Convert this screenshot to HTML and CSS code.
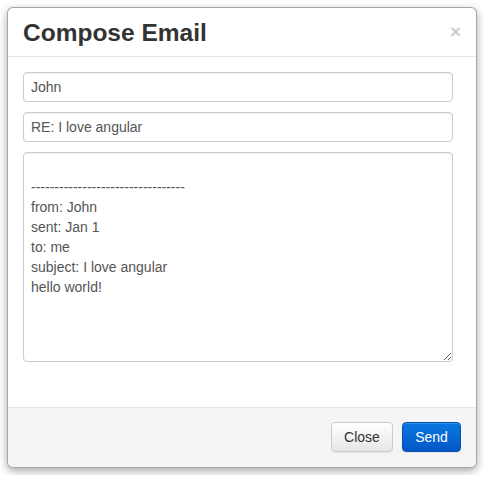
FILE: index.html
```html
<!DOCTYPE html>
<html>
<head>
<meta charset="utf-8">
<link rel="stylesheet" href="styles.css">
</head>
<body>
<div class="modal">
  <div class="modal-header">
    <h3 class="modal-title">Compose Email</h3>
    <button class="close" type="button">×</button>
  </div>
  <div class="modal-body">
    <input class="form-control" type="text" value="John">
    <input class="form-control" type="text" value="RE: I love angular">
    <textarea class="form-control message">

---------------------------------
from: John
sent: Jan 1
to: me
subject: I love angular
hello world!</textarea>
  </div>
  <div class="modal-footer">
    <button class="btn btn-default" type="button">Close</button>
    <button class="btn btn-primary" type="button">Send</button>
  </div>
</div>
</body>
</html>
```
FILE: styles.css
```css
* { box-sizing: border-box; }
html, body { margin: 0; padding: 0; background: #fff; }
body {
  font-family: "Liberation Sans", Arial, sans-serif;
  font-size: 14px;
  line-height: 20px;
  color: #333;
  padding: 7px;
}
.modal {
  width: 470px;
  height: 461px;
  border: 1px solid rgba(0,0,0,0.35);
  border-radius: 6px;
  box-shadow: 0 3px 9px rgba(0,0,0,0.35);
  background: #fff;
  display: flex;
  flex-direction: column;
  overflow: hidden;
}
.modal-header {
  display: flex;
  justify-content: space-between;
  align-items: flex-start;
  padding: 12px 15px 10px 15px;
  border-bottom: 1px solid #e5e5e5;
  height: 49px;
}
.modal-title {
  margin: 0;
  font-size: 24.5px;
  line-height: 26px;
  font-weight: bold;
  color: #333;
}
.close {
  border: 0;
  background: none;
  padding: 0;
  margin-top: 2px;
  margin-right: 0;
  font-family: "Liberation Sans", Arial, sans-serif;
  font-size: 19px;
  line-height: 20px;
  font-weight: bold;
  color: #000;
  opacity: 0.2;
}
.modal-body {
  padding: 15px 15px 0 15px;
  display: flex;
  flex-direction: column;
  gap: 10px;
  flex: 1;
}
.form-control {
  display: block;
  width: 430px;
  height: 30px;
  padding: 4px 7px;
  font-family: "Liberation Sans", Arial, sans-serif;
  font-size: 14px;
  line-height: 20px;
  color: #555;
  background: #fff;
  border: 1px solid #ccc;
  border-radius: 4px;
  box-shadow: inset 0 1px 1px rgba(0,0,0,0.075);
  margin: 0;
}
.message {
  height: 210px;
  padding: 4px 7px;
  resize: both;
  overflow: hidden;
}
.modal-footer {
  height: 60px;
  background: #f5f5f5;
  border-top: 1px solid #e5e5e5;
  display: flex;
  justify-content: flex-end;
  align-items: flex-start;
  gap: 9px;
  padding: 14px 15px 0 15px;
}
.btn {
  height: 30px;
  padding: 0 12px;
  font-family: "Liberation Sans", Arial, sans-serif;
  font-size: 14px;
  line-height: 28px;
  border-radius: 4px;
  cursor: pointer;
}
.btn-default {
  width: 62px;
  color: #333;
  background: linear-gradient(#ffffff, #e6e6e6);
  border: 1px solid #ccc;
  box-shadow: inset 0 1px 0 rgba(255,255,255,0.15), 0 1px 1px rgba(0,0,0,0.075);
}
.btn-primary {
  width: 59px;
  color: #fff;
  background: linear-gradient(#0a78e2, #0357c6);
  border: 1px solid #0452b8;
  box-shadow: inset 0 1px 0 rgba(255,255,255,0.15), 0 1px 1px rgba(0,0,0,0.075);
}
```
